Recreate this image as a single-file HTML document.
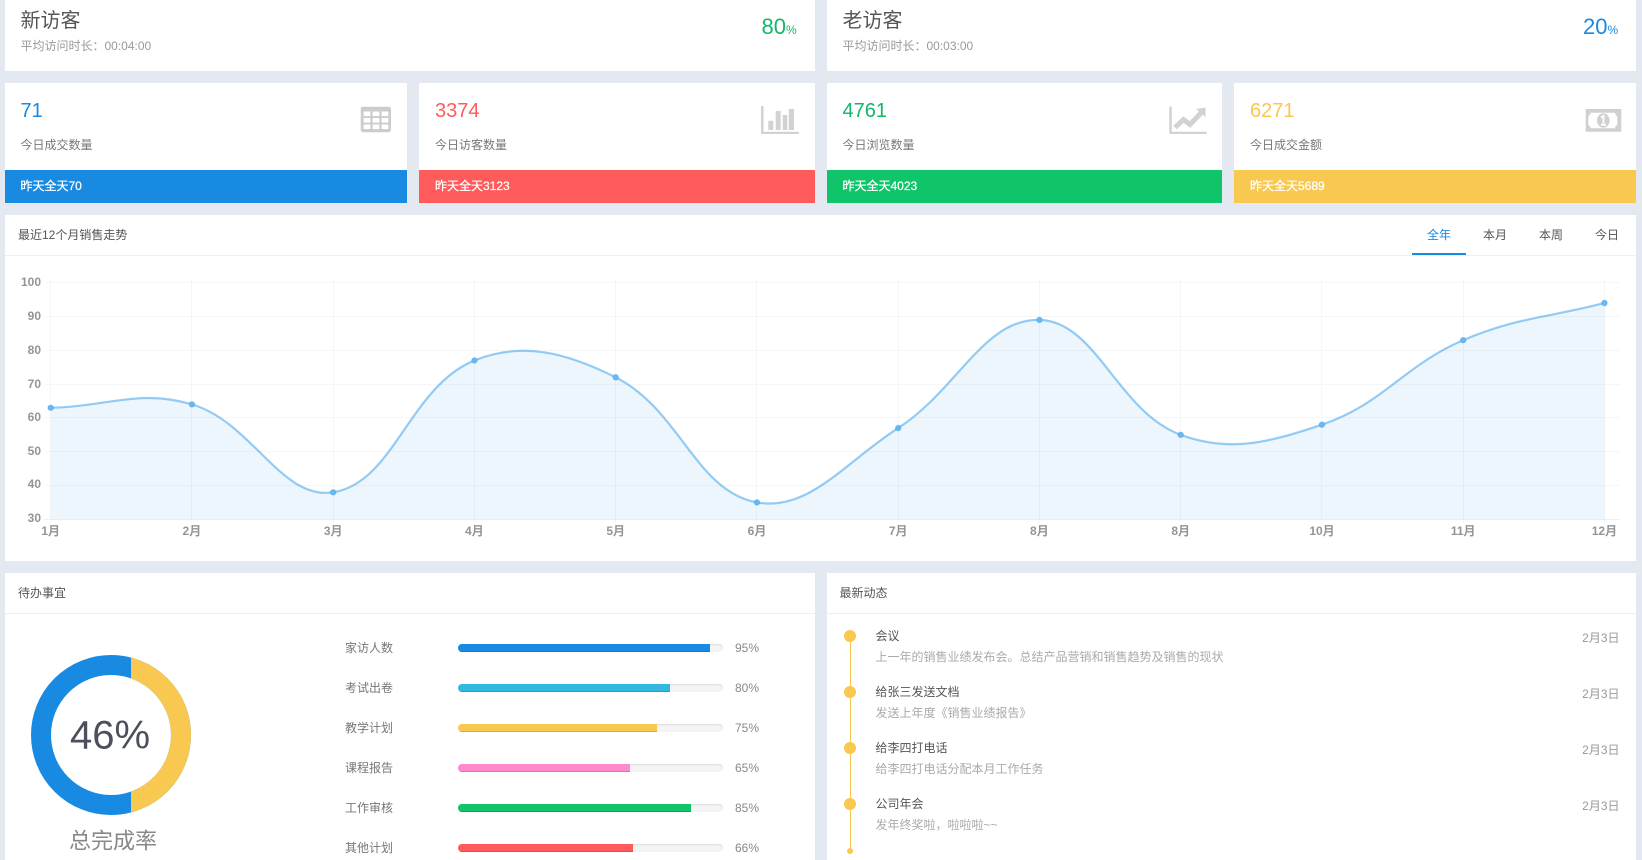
<!DOCTYPE html>
<html lang="zh-CN"><head><meta charset="utf-8"><title>Dashboard</title>
<style>
*{box-sizing:border-box;margin:0;padding:0}
html,body{width:1642px;height:860px;overflow:hidden;background:#e4e8f0}
body{position:relative;font-family:"Liberation Sans","Noto Sans CJK SC",sans-serif;font-size:12px;color:#666;filter:blur(.3px)}
.c{position:absolute;background:#fff}
.t{position:absolute;white-space:nowrap;line-height:20px;height:20px}
.l{position:absolute;height:1px;background:#eee}
.bar{position:absolute;left:458px;width:265px;height:8px;background:#f5f5f5;border-radius:4px;box-shadow:inset 0 1px 2px rgba(0,0,0,.1);overflow:hidden}
.bar i{display:block;height:8px;box-shadow:inset 0 -1px 0 rgba(0,0,0,.15)}
.f{position:absolute;top:170px;height:33px}
.y{color:#fff;-webkit-text-stroke:.25px #fff}
.dot{position:absolute;left:844px;width:12px;height:12px;border-radius:50%;background:#f9c851}
svg{position:absolute;left:0;top:0}
svg text{font-family:"Liberation Sans","Noto Sans CJK SC",sans-serif}
</style></head><body>
<div class="c" style="left:5px;top:0;width:810px;height:71px"></div>
<div class="c" style="left:827px;top:0;width:809px;height:71px"></div>
<div class="t" style="left:20.5px;top:11px;font-size:20px;color:#555">新访客</div>
<div class="t" style="left:20.5px;top:35.5px;color:#999">平均访问时长：00:04:00</div>
<div class="t" style="left:761.5px;top:16.5px;font-size:22px;color:#12b76a">80<span style="font-size:12px">%</span></div>
<div class="t" style="left:842.5px;top:11px;font-size:20px;color:#555">老访客</div>
<div class="t" style="left:842.5px;top:35.5px;color:#999">平均访问时长：00:03:00</div>
<div class="t" style="left:1583px;top:16.5px;font-size:22px;color:#188ae2">20<span style="font-size:12px">%</span></div>

<div class="c" style="left:5px;top:83px;width:402px;height:120px"></div>
<div class="c" style="left:419px;top:83px;width:396px;height:120px"></div>
<div class="c" style="left:827px;top:83px;width:395px;height:120px"></div>
<div class="c" style="left:1234px;top:83px;width:402px;height:120px"></div>
<div class="f" style="left:5px;width:402px;background:#188ae2"></div>
<div class="f" style="left:419px;width:396px;background:#ff5b5b"></div>
<div class="f" style="left:827px;width:395px;background:#10c469"></div>
<div class="f" style="left:1234px;width:402px;background:#f9c851"></div>

<div class="t" style="left:20.5px;top:101px;font-size:20px;color:#188ae2">71</div>
<div class="t" style="left:20.5px;top:134.5px;color:#777">今日成交数量</div>
<div class="t y" style="left:20.5px;top:175.5px">昨天全天70</div>
<div class="t" style="left:435px;top:101px;font-size:20px;color:#ff5b5b">3374</div>
<div class="t" style="left:435px;top:134.5px;color:#777">今日访客数量</div>
<div class="t y" style="left:435px;top:175.5px">昨天全天3123</div>
<div class="t" style="left:842.5px;top:101px;font-size:20px;color:#12b76a">4761</div>
<div class="t" style="left:842.5px;top:134.5px;color:#777">今日浏览数量</div>
<div class="t y" style="left:842.5px;top:175.5px">昨天全天4023</div>
<div class="t" style="left:1250px;top:101px;font-size:20px;color:#f9c851">6271</div>
<div class="t" style="left:1250px;top:134.5px;color:#777">今日成交金额</div>
<div class="t y" style="left:1250px;top:175.5px">昨天全天5689</div>

<div class="c" style="left:5px;top:215px;width:1631px;height:346px"></div>
<div class="l" style="left:5px;top:255px;width:1631px"></div>
<div class="t" style="left:18px;top:224.5px;color:#555">最近12个月销售走势</div>
<div class="t" style="left:1427px;top:225px;color:#188ae2">全年</div>
<div style="position:absolute;left:1412px;top:253px;width:54px;height:2px;background:#188ae2"></div>
<div class="t" style="left:1483px;top:225px;color:#555">本月</div>
<div class="t" style="left:1539px;top:225px;color:#555">本周</div>
<div class="t" style="left:1595px;top:225px;color:#555">今日</div>

<div class="c" style="left:5px;top:573px;width:810px;height:287px"></div>
<div class="c" style="left:827px;top:573px;width:809px;height:287px"></div>
<div class="l" style="left:5px;top:613px;width:810px"></div>
<div class="l" style="left:827px;top:613px;width:809px"></div>
<div class="t" style="left:18px;top:582.5px;color:#555">待办事宜</div>
<div class="t" style="left:839.5px;top:582.5px;color:#555">最新动态</div>

<svg width="1642" height="860" viewBox="0 0 1642 860">
<!-- icons -->
<path fill="#ccc" fill-rule="evenodd" d="M363.2 106.7h25.3a2.5 2.5 0 0 1 2.5 2.5v20.6a2.5 2.5 0 0 1-2.5 2.5h-25.3a2.5 2.5 0 0 1-2.5-2.5v-20.6a2.5 2.5 0 0 1 2.5-2.5zM363.6 111.5v4.6h6.8v-4.6zM372.6 111.5v4.6h6.8v-4.6zM381.6 111.5v4.6h6.8v-4.6zM363.6 118v4.6h6.8v-4.6zM372.6 118v4.6h6.8v-4.6zM381.6 118v4.6h6.8v-4.6zM363.6 124.5v4.6h6.8v-4.6zM372.6 124.5v4.6h6.8v-4.6zM381.6 124.5v4.6h6.8v-4.6z"/>
<path fill="#d2d2d2" d="M761 106h2.5v25.7H799V134H761zM768.3 120.7h5V130h-5zM775.7 111h5v19h-5zM782.7 115h4.5v15h-4.5zM788.7 109h5.3v21h-5.3z"/>
<path fill="#d2d2d2" d="M1169.3 106.5h2.5v25.2h34.9V134h-37.4z"/>
<path fill="none" stroke="#d2d2d2" stroke-width="5" d="M1175 127.5l8.5-8 6.5 5 11-11.5"/>
<path fill="#d2d2d2" d="M1196 109l9.5-1.5v9.5z"/>
<path fill="#d0d0d0" fill-rule="evenodd" d="M1585.7 109h35.6v22.7h-35.6zM1591 112.7l-2.7 4v7.6l2.7 4h23.6l2.7-4v-7.6l-2.7-4z"/>
<ellipse cx="1603.3" cy="120.5" rx="6.3" ry="7.3" fill="#d0d0d0"/>
<path fill="none" stroke="#fff" stroke-width="1.8" d="M1601 117.5l2.5-1.5v8.5M1601 124.8h5"/>

<!-- chart grid -->
<g stroke="#f6f6f6" stroke-width="1" fill="none">
<path d="M45 282.5H1620M45 316.5H1620M45 350.5H1620M45 384.5H1620M45 417.5H1620M45 451.5H1620M45 485.5H1620"/>
<path d="M50.5 280V523M191.5 280V523M333.5 280V523M474.5 280V523M615.5 280V523M756.5 280V523M898.5 280V523M1039.5 280V523M1180.5 280V523M1321.5 280V523M1463.5 280V523M1604.5 280V523"/>
</g>
<path d="M45 519.5H1620" stroke="#eee" stroke-width="1"/>
<path fill="rgba(26,144,230,.08)" d="M50.7 407.76C107.2 406.41 140.05 388.86 191.95 404.38C253.05 422.66 280.91 500.39 333.2 492.26C393.91 482.82 409.36 386.92 474.45 360.44C522.36 340.95 567.11 352.92 615.7 377.34C680.11 409.71 695.73 491.41 756.95 502.4C808.73 511.69 844.75 462.57 898.2 428.04C957.75 389.56 983.6 318.54 1039.45 319.88C1096.6 321.25 1117.14 411.22 1180.7 434.8C1230.14 453.14 1269.69 442.17 1321.95 424.66C1382.69 404.31 1403.34 365.94 1463.2 340.16C1516.34 317.27 1547.95 317.85 1604.45 302.98V519.3H50.7Z"/>
<path fill="none" stroke="rgba(26,144,230,.45)" stroke-width="2.2" d="M50.7 407.76C107.2 406.41 140.05 388.86 191.95 404.38C253.05 422.66 280.91 500.39 333.2 492.26C393.91 482.82 409.36 386.92 474.45 360.44C522.36 340.95 567.11 352.92 615.7 377.34C680.11 409.71 695.73 491.41 756.95 502.4C808.73 511.69 844.75 462.57 898.2 428.04C957.75 389.56 983.6 318.54 1039.45 319.88C1096.6 321.25 1117.14 411.22 1180.7 434.8C1230.14 453.14 1269.69 442.17 1321.95 424.66C1382.69 404.31 1403.34 365.94 1463.2 340.16C1516.34 317.27 1547.95 317.85 1604.45 302.98"/>
<g fill="#6ab8ee" stroke="rgba(26,144,230,.3)" stroke-width="1">
<circle cx="50.7" cy="407.76" r="2.8"/><circle cx="191.95" cy="404.38" r="2.8"/><circle cx="333.2" cy="492.26" r="2.8"/><circle cx="474.45" cy="360.44" r="2.8"/><circle cx="615.7" cy="377.34" r="2.8"/><circle cx="756.95" cy="502.4" r="2.8"/><circle cx="898.2" cy="428.04" r="2.8"/><circle cx="1039.45" cy="319.88" r="2.8"/><circle cx="1180.7" cy="434.8" r="2.8"/><circle cx="1321.95" cy="424.66" r="2.8"/><circle cx="1463.2" cy="340.16" r="2.8"/><circle cx="1604.45" cy="302.98" r="2.8"/>
</g>
<g font-size="12" font-weight="bold" fill="#949494" text-anchor="end">
<text x="41" y="286">100</text><text x="41" y="320">90</text><text x="41" y="354">80</text><text x="41" y="388">70</text><text x="41" y="421">60</text><text x="41" y="455">50</text><text x="41" y="488">40</text><text x="41" y="522">30</text>
</g>
<g font-size="12" font-weight="bold" fill="#949494" text-anchor="middle">
<text x="50.7" y="535">1月</text><text x="191.9" y="535">2月</text><text x="333.2" y="535">3月</text><text x="474.4" y="535">4月</text><text x="615.7" y="535">5月</text><text x="757" y="535">6月</text><text x="898.2" y="535">7月</text><text x="1039.4" y="535">8月</text><text x="1180.7" y="535">8月</text><text x="1322" y="535">10月</text><text x="1463.2" y="535">11月</text><text x="1604.4" y="535">12月</text>
</g>

<!-- donut -->
<clipPath id="cy"><rect x="131" y="640" width="70" height="190"/></clipPath>
<circle cx="111" cy="735" r="70" fill="none" stroke="#188ae2" stroke-width="20"/>
<circle cx="111" cy="735" r="70" fill="none" stroke="#f9c851" stroke-width="20" clip-path="url(#cy)"/>
<text x="110" y="748.5" font-size="40" fill="#4a515c" text-anchor="middle">46%</text>
<text x="113" y="848.5" font-size="22" fill="#888" text-anchor="middle">总完成率</text>
</svg>

<div class="t" style="left:345px;top:637.5px;color:#777">家访人数</div>
<div class="t" style="left:345px;top:677.5px;color:#777">考试出卷</div>
<div class="t" style="left:345px;top:717.5px;color:#777">教学计划</div>
<div class="t" style="left:345px;top:757.5px;color:#777">课程报告</div>
<div class="t" style="left:345px;top:797.5px;color:#777">工作审核</div>
<div class="t" style="left:345px;top:837.5px;color:#777">其他计划</div>
<div class="bar" style="top:644px"><i style="width:252px;background:#188ae2"></i></div>
<div class="bar" style="top:684px"><i style="width:212px;background:#35b8e0"></i></div>
<div class="bar" style="top:724px"><i style="width:199px;background:#f9c851"></i></div>
<div class="bar" style="top:764px"><i style="width:172px;background:#ff8acc"></i></div>
<div class="bar" style="top:804px"><i style="width:233px;background:#10c469"></i></div>
<div class="bar" style="top:844px"><i style="width:175px;background:#ff5b5b"></i></div>
<div class="t" style="left:735px;top:637.5px;color:#888">95%</div>
<div class="t" style="left:735px;top:677.5px;color:#888">80%</div>
<div class="t" style="left:735px;top:717.5px;color:#888">75%</div>
<div class="t" style="left:735px;top:757.5px;color:#888">65%</div>
<div class="t" style="left:735px;top:797.5px;color:#888">85%</div>
<div class="t" style="left:735px;top:837.5px;color:#888">66%</div>

<div style="position:absolute;left:849.5px;top:636px;width:1px;height:215px;background:#f9c851"></div>
<div class="dot" style="top:630px"></div>
<div class="dot" style="top:686px"></div>
<div class="dot" style="top:742px"></div>
<div class="dot" style="top:798px"></div>
<div class="dot" style="left:847px;top:848px;width:6px;height:6px"></div>
<div class="t" style="left:875.5px;top:625.5px;color:#555">会议</div>
<div class="t" style="left:875.5px;top:646.5px;color:#aaa">上一年的销售业绩发布会。总结产品营销和销售趋势及销售的现状</div>
<div class="t" style="right:22.5px;top:627.5px;color:#999">2月3日</div>
<div class="t" style="left:875.5px;top:681.5px;color:#555">给张三发送文档</div>
<div class="t" style="left:875.5px;top:702.5px;color:#aaa">发送上年度《销售业绩报告》</div>
<div class="t" style="right:22.5px;top:683.5px;color:#999">2月3日</div>
<div class="t" style="left:875.5px;top:737.5px;color:#555">给李四打电话</div>
<div class="t" style="left:875.5px;top:758.5px;color:#aaa">给李四打电话分配本月工作任务</div>
<div class="t" style="right:22.5px;top:739.5px;color:#999">2月3日</div>
<div class="t" style="left:875.5px;top:793.5px;color:#555">公司年会</div>
<div class="t" style="left:875.5px;top:814.5px;color:#aaa">发年终奖啦，啦啦啦~~</div>
<div class="t" style="right:22.5px;top:795.5px;color:#999">2月3日</div>
</body></html>
